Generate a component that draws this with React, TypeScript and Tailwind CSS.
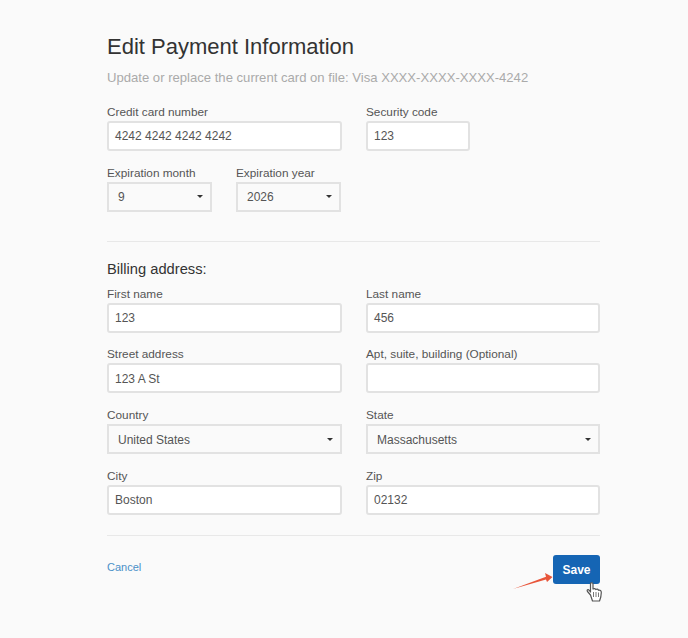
function Field({ label, value, className }: { label: string; value?: string; className?: string }) {
  return (
    <div className={className}>
      <div className="mb-[1px] h-[16px] text-[11.8px] leading-[16px] text-[#555]">{label}</div>
      <div className="flex h-[30px] items-center rounded-[3px] border-2 border-[#e2e2e2] bg-white pl-[6px] pt-[0.5px] text-[12px] text-[#555]">
        {value}
      </div>
    </div>
  );
}

function SelectField({ label, value, className }: { label: string; value: string; className?: string }) {
  return (
    <div className={className}>
      <div className="mb-[1px] h-[16px] text-[11.8px] leading-[16px] text-[#555]">{label}</div>
      <div className="flex h-[30px] items-center justify-between border-2 border-[#e2e2e2] bg-[#fafafa] pl-[9px] pr-[7px] pt-[0.5px] text-[12px] text-[#555]">
        <span>{value}</span>
        <span className="h-0 w-0 border-x-[3px] border-t-[3px] border-x-transparent border-t-[#333]" />
      </div>
    </div>
  );
}

export default function App() {
  return (
    <div className="h-[638px] w-[688px] bg-[#fafafa] pl-[107px] pr-[88px] pt-[33px] font-['Liberation_Sans',sans-serif]">
      <h1 className="text-[22px] leading-[27px] text-[#333]">Edit Payment Information</h1>
      <p className="mt-[9px] text-[13.1px] leading-[18px] text-[#aaa]">
        Update or replace the current card on file: Visa XXXX-XXXX-XXXX-4242
      </p>

      <div className="mt-[17px] flex gap-[24px]">
        <Field label="Credit card number" value="4242 4242 4242 4242" className="w-[235px]" />
        <Field label="Security code" value="123" className="w-[104px]" />
      </div>
      <div className="mt-[13.5px] flex gap-[24px]">
        <SelectField label="Expiration month" value="9" className="w-[105px]" />
        <SelectField label="Expiration year" value="2026" className="w-[105px]" />
      </div>

      <div className="mt-[29.5px] h-px bg-[#e8e8e8]" />

      <h2 className="mt-[17.5px] text-[14.7px] leading-[18px] text-[#333]">Billing address:</h2>

      <div className="mt-[8.2px] grid grid-cols-[235px_234px] gap-x-[24px] gap-y-[13.8px]">
        <Field label="First name" value="123" />
        <Field label="Last name" value="456" />
        <Field label="Street address" value="123 A St" />
        <Field label="Apt, suite, building (Optional)" />
        <SelectField label="Country" value="United States" />
        <SelectField label="State" value="Massachusetts" />
        <Field label="City" value="Boston" />
        <Field label="Zip" value="02132" />
      </div>

      <div className="mt-[20px] h-px bg-[#e8e8e8]" />

      <div className="relative mt-[19px] flex items-start justify-between">
        <a className="mt-[5px] text-[11px] leading-[15px] text-[#4a90c8]">Cancel</a>
        <button className="h-[29px] w-[47px] rounded-[3px] bg-[#1565b4] text-[12px] font-bold text-white">Save</button>
        <svg className="absolute left-[405px] top-[17px]" width="42" height="22" viewBox="0 0 42 22">
          <path d="M1 17 L34 4.8 L33 1 L40.5 5 L35 10 L34 7.5 Z" fill="#e8553a" />
        </svg>
        <svg className="absolute left-[479px] top-[27px]" width="16" height="20" viewBox="0 0 16 20">
          <path d="M4.500 13 L1.500 9.500 C0.500 8 2 7 3.300 8.300 L4.500 10 L4.500 2 C4.500 0.300 7 0.300 7 2 L7 7 C8 6.300 9.300 6.500 9.800 7.500 C10.800 6.800 12 7 12.500 8.300 C14 7.800 15.300 8.800 15.300 10.500 L14.800 15 L13.500 19 L6.500 19 Z" fill="#fff" stroke="#555" strokeWidth="1.2" strokeLinejoin="round" />
          <path d="M7.500 10v5M10 10v5M12.500 10.500v4.500" stroke="#555" strokeWidth="0.8" />
        </svg>
      </div>
    </div>
  );
}
